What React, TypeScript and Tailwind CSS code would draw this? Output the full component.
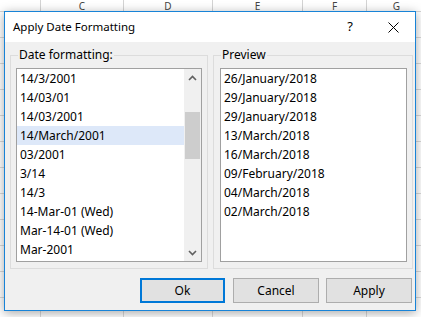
import React from 'react';

const formats = [
  '14/3/2001',
  '14/03/01',
  '14/03/2001',
  '14/March/2001',
  '03/2001',
  '3/14',
  '14/3',
  '14-Mar-01 (Wed)',
  'Mar-14-01 (Wed)',
  'Mar-2001',
];

const preview = [
  '26/January/2018',
  '29/January/2018',
  '29/January/2018',
  '13/March/2018',
  '16/March/2018',
  '09/February/2018',
  '04/March/2018',
  '02/March/2018',
];

const columns = [
  { label: '', w: 'w-[41px]' },
  { label: 'C', w: 'w-[83px]' },
  { label: 'D', w: 'w-[89px]' },
  { label: 'E', w: 'w-[90px]' },
  { label: 'F', w: 'w-[64px]' },
  { label: 'G', w: 'w-[60px]' },
];

const font = { fontFamily: '"Segoe UI", "Noto Sans", sans-serif' };

const Chevron: React.FC<{ down?: boolean }> = ({ down }) => (
  <svg width="9" height="6" viewBox="0 0 9 6" className={down ? 'rotate-180' : ''}>
    <path d="M1 5 L4.5 1.5 L8 5" fill="none" stroke="#606060" strokeWidth="1.6" />
  </svg>
);

const GroupBox: React.FC<{ label: string; className: string; children: React.ReactNode }> = ({
  label,
  className,
  children,
}) => (
  <div className={`relative h-[214px] border border-[#dcdcdc] pt-[12px] ${className}`}>
    {/* caption sits over the top border */}
    <span className="absolute left-[7px] top-[-10px] bg-[#f0f0f0] px-[1px] text-[12px] leading-[18px] text-black">
      {label}
    </span>
    {children}
  </div>
);

const App: React.FC = () => {
  return (
    <div className="relative h-[317px] w-[421px] overflow-hidden bg-white" style={font}>
      {/* sheet behind the dialog */}
      <div className="flex h-[12px] border-b border-[#d4d4d4]">
        {columns.map((c, i) => (
          <div
            key={i}
            className={`${c.w} shrink-0 border-r border-[#d4d4d4] pt-[1px] text-center text-[10px] leading-[10px] text-[#444]`}
          >
            {c.label}
          </div>
        ))}
      </div>
      {Array.from({ length: 12 }).map((_, r) => (
        <div key={r} className="flex h-[26px] border-b border-[#d9d9d9]">
          {columns.map((c, i) => (
            <div key={i} className={`${c.w} shrink-0 border-r border-[#d9d9d9]`} />
          ))}
        </div>
      ))}

      {/* dialog window */}
      <div className="absolute left-[4px] top-[11px] flex h-[300px] w-[412px] flex-col border border-[#1883d7] bg-[#f0f0f0] shadow-[0_2px_10px_rgba(0,0,0,0.35)]">
        <div className="flex h-[30px] items-center bg-white pl-[8px] text-[11.5px] text-black">
          <span className="flex-1">Apply Date Formatting</span>
          <span className="w-[20px] text-center text-[13px]">?</span>
          <div className="ml-[27px] mr-[16px] flex w-[12px] justify-center">
            <svg width="11" height="11" viewBox="0 0 11 11">
              <path d="M0.5 0.5 L10.5 10.5 M10.5 0.5 L0.5 10.5" stroke="#000" strokeWidth="1" />
            </svg>
          </div>
        </div>

        <div className="flex flex-1 flex-col pb-[7px] pl-[5px] pr-[2px] pt-[13px]">
          <div className="flex gap-[5px]">
            <GroupBox label="Date formatting:" className="w-[198px] px-[5px]">
              <div className="flex h-[194px] w-[186px] border border-[#a0a0a0] bg-white">
                <div className="w-[167px]">
                  {formats.map((f, i) => (
                    <div
                      key={f}
                      className={`h-[19px] pl-[3px] text-[12px] leading-[19px] text-black ${
                        i === 3 ? 'bg-[#dde8f9]' : ''
                      }`}
                    >
                      {f}
                    </div>
                  ))}
                </div>
                <div className="flex w-[17px] flex-col bg-[#f0f0f0]">
                  <div className="flex h-[17px] items-center justify-center">
                    <Chevron />
                  </div>
                  <div className="flex-1 pl-[1px] pt-[26px]">
                    <div className="h-[47px] w-[15px] bg-[#cdcdcd]" />
                  </div>
                  <div className="flex h-[17px] items-center justify-center">
                    <Chevron down />
                  </div>
                </div>
              </div>
            </GroupBox>

            <GroupBox label="Preview" className="w-[200px] pl-[6px] pr-[5px]">
              <div className="h-[194px] w-[187px] border border-[#a0a0a0] bg-white">
                {preview.map((p, i) => (
                  <div key={i} className="h-[19px] pl-[3px] text-[12px] leading-[19px] text-black">
                    {p}
                  </div>
                ))}
              </div>
            </GroupBox>
          </div>

          <div className="mt-[9px] flex justify-end pr-[1px] text-[12px] text-black">
            <button className="h-[25px] w-[85px] border-2 border-[#0078d7] bg-[#e1e1e1]">Ok</button>
            <button className="ml-[8px] h-[25px] w-[86px] border border-[#adadad] bg-[#e1e1e1]">
              Cancel
            </button>
            <button className="ml-[7px] h-[25px] w-[86px] border border-[#adadad] bg-[#e1e1e1]">
              Apply
            </button>
          </div>
        </div>
      </div>
    </div>
  );
};

export default App;
